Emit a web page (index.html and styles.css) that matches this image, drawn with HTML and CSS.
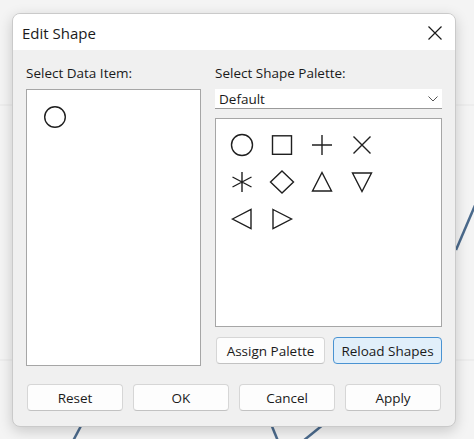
FILE: index.html
```html
<!DOCTYPE html>
<html lang="en">
<head>
    <title>Edit Shape</title>
    <meta name="viewport" content="width=device-width, initial-scale=1">
    <link rel="stylesheet" href="styles.css">
</head>
<body>
    <svg class="backdrop" width="474" height="439" viewBox="0 0 474 439">
        <line x1="0" y1="105" x2="474" y2="105" stroke="#e6e6e6" stroke-width="1"/>
        <line x1="0" y1="360" x2="474" y2="360" stroke="#e6e6e6" stroke-width="1"/>
        <line x1="476" y1="203" x2="456" y2="250" stroke="#4b6a8c" stroke-width="2.5"/>
        <line x1="82" y1="424" x2="73" y2="441" stroke="#4b6a8c" stroke-width="2.5"/>
        <line x1="271" y1="424" x2="278" y2="441" stroke="#4b6a8c" stroke-width="2.5"/>
        <line x1="324" y1="424" x2="303" y2="441" stroke="#4b6a8c" stroke-width="2.5"/>
    </svg>

    <div class="dialog">
        <div class="titlebar">
            <span class="title">Edit Shape</span>
            <svg class="close" width="14" height="14" viewBox="0 0 14 14">
                <path d="M0.5 0.5 L13.5 13.5 M13.5 0.5 L0.5 13.5" stroke="#1a1a1a" stroke-width="1.2" fill="none"/>
            </svg>
        </div>
        <div class="content">
            <div class="columns">
                <div class="col-left">
                    <div class="label">Select Data Item:</div>
                    <div class="listbox">
                        <svg class="item-shape" width="24" height="24" viewBox="0 0 24 24">
                            <circle cx="12" cy="12" r="10.3" stroke="#1f1f1f" stroke-width="1.4" fill="none"/>
                        </svg>
                    </div>
                </div>
                <div class="col-right">
                    <div class="label">Select Shape Palette:</div>
                    <div class="select">
                        <span>Default</span>
                        <svg width="10" height="6" viewBox="0 0 10 6">
                            <path d="M0.5 0.5 L5 5 L9.5 0.5" stroke="#555" stroke-width="1" fill="none"/>
                        </svg>
                    </div>
                    <div class="palette">
                        <div class="shape"><svg width="26" height="26" viewBox="0 0 26 26"><circle cx="13" cy="13" r="10.5"/></svg></div>
                        <div class="shape"><svg width="26" height="26" viewBox="0 0 26 26"><rect x="3.5" y="3.8" width="19" height="18.5"/></svg></div>
                        <div class="shape"><svg width="26" height="26" viewBox="0 0 26 26"><path d="M3 13 H23 M13 3 V23"/></svg></div>
                        <div class="shape"><svg width="26" height="26" viewBox="0 0 26 26"><path d="M4.5 4.5 L21.5 21.5 M21.5 4.5 L4.5 21.5"/></svg></div>

                        <div class="shape"><svg width="26" height="26" viewBox="0 0 26 26"><path d="M13 3 V23 M3.5 8 L22.5 18 M3.5 18 L22.5 8"/></svg></div>
                        <div class="shape"><svg width="26" height="26" viewBox="0 0 26 26"><path d="M13 2 L24.5 13 L13 24 L1.5 13 Z"/></svg></div>
                        <div class="shape"><svg width="26" height="26" viewBox="0 0 26 26"><path d="M13 3.5 L22.5 22 L3.5 22 Z"/></svg></div>
                        <div class="shape"><svg width="26" height="26" viewBox="0 0 26 26"><path d="M3.5 4 L22.5 4 L13 22.5 Z"/></svg></div>

                        <div class="shape"><svg width="26" height="26" viewBox="0 0 26 26"><path d="M3.5 13 L22 3.5 L22 22.5 Z"/></svg></div>
                        <div class="shape"><svg width="26" height="26" viewBox="0 0 26 26"><path d="M4 3.5 L22.5 13 L4 22.5 Z"/></svg></div>
                    </div>
                    <div class="palette-buttons">
                        <button class="btn">Assign Palette</button>
                        <button class="btn btn-active">Reload Shapes</button>
                    </div>
                </div>
            </div>
            <div class="footer">
                <button class="btn">Reset</button>
                <button class="btn">OK</button>
                <button class="btn">Cancel</button>
                <button class="btn">Apply</button>
            </div>
        </div>
    </div>
</body>
</html>
```

FILE: styles.css
```css
html {
    font-family: "Open Sans", "Noto Sans", sans-serif;
}
html, body {
    margin: 0;
    width: 474px;
    height: 439px;
}
body {
    overflow: hidden;
    background-color: #f4f4f4;
    padding: 13px 0 0 12px;
    box-sizing: border-box;
}
.backdrop {
    position: absolute;
    top: 0;
    left: 0;
}
.dialog {
    position: relative;
    width: 444px;
    height: 414px;
    box-sizing: border-box;
    border: 1px solid #cacaca;
    border-radius: 8px;
    overflow: hidden;
    background-color: #f0f0f0;
    box-shadow: 0 4px 14px rgba(0, 0, 0, 0.18);
}
.titlebar {
    height: 36px;
    background-color: #fff;
    display: flex;
    align-items: center;
    justify-content: space-between;
    padding: 0 13px 0 9px;
}
.title {
    font-size: 15px;
    color: #1a1a1a;
    margin-top: 1px;
}
.close {
    margin-top: 2px;
}
.content {
    padding: 13px 13px 0 13px;
}
.columns {
    display: flex;
    gap: 14px;
}
.label {
    font-size: 13.5px;
    color: #1a1a1a;
    height: 20px;
    line-height: 20px;
}
.col-left {
    width: 175px;
}
.listbox {
    margin-top: 6px;
    height: 277px;
    box-sizing: border-box;
    border: 1px solid #a6a6a6;
    background-color: #fff;
    padding: 15px 0 0 16px;
}
.item-shape {
    display: block;
}
.col-right {
    width: 227px;
}
.select {
    margin-top: 6px;
    height: 20px;
    box-sizing: border-box;
    background-color: #fff;
    border-bottom: 1px solid #9a9a9a;
    display: flex;
    align-items: center;
    justify-content: space-between;
    padding: 0 4px 0 4px;
    font-size: 13.5px;
    color: #1a1a1a;
}
.select svg {
    margin-top: 1px;
}
.palette {
    margin-top: 9px;
    height: 209px;
    box-sizing: border-box;
    border: 1px solid #a6a6a6;
    background-color: #fff;
    padding: 7px 6px;
    display: grid;
    grid-template-columns: repeat(4, 40px);
    grid-auto-rows: 37px;
    align-content: start;
}
.shape {
    display: flex;
    align-items: center;
    justify-content: center;
}
.shape svg * {
    fill: none;
    stroke: #1f1f1f;
    stroke-width: 1.4;
}
.palette-buttons {
    margin-top: 10px;
    display: flex;
    gap: 8px;
    padding-left: 1px;
}
.palette-buttons .btn {
    width: 109px;
}
.btn {
    height: 27px;
    box-sizing: border-box;
    border: 1px solid #d6d6d6;
    border-bottom-color: #c2c2c2;
    border-radius: 4px;
    background-color: #fdfdfd;
    font-family: "Open Sans", "Noto Sans", sans-serif;
    font-size: 13.5px;
    color: #1a1a1a;
    padding: 0;
}
.btn-active {
    background-color: #e1effa;
    border-color: #4a93d2;
}
.footer {
    margin-top: 18px;
    display: flex;
    gap: 10px;
    padding-left: 1px;
}
.footer .btn {
    width: 96px;
}
```
